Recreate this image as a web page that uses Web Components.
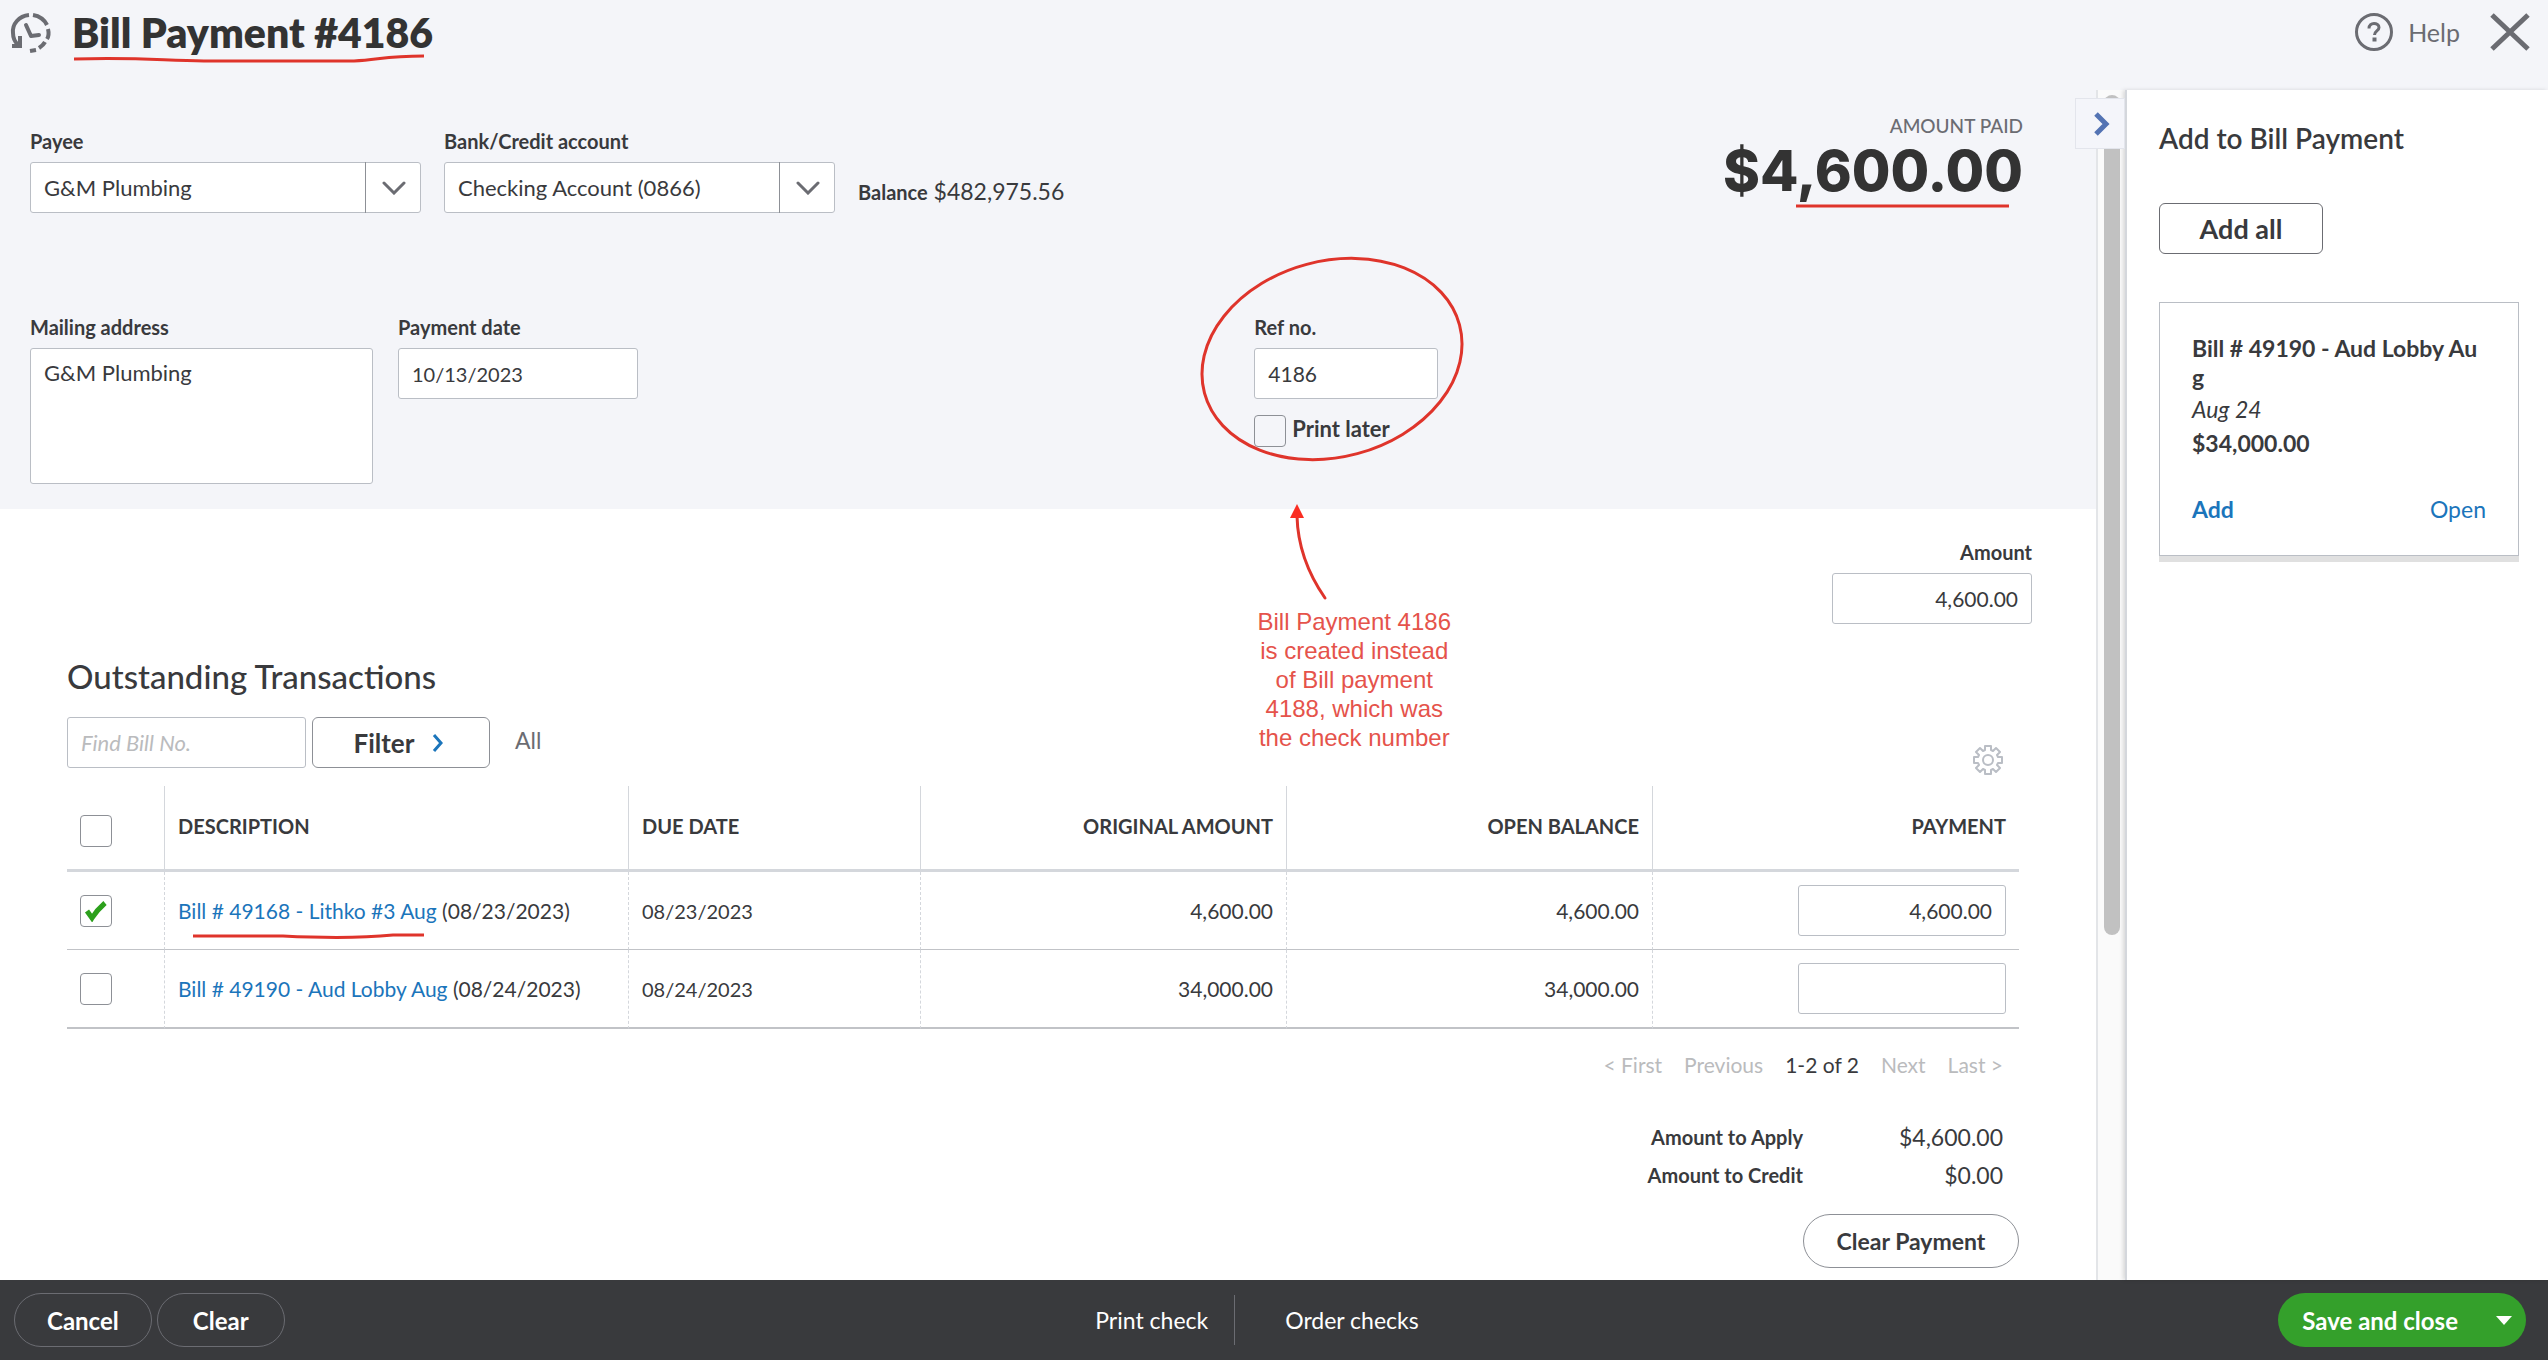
<!DOCTYPE html>
<html lang="en">
<head>
<meta charset="utf-8">
<title>Bill Payment #4186</title>
<style>
  body {
    margin: 0;
    font-family: Lato, "Open Sans", sans-serif;
    font-size: 21px;
    color: #393a3d;
  }
</style>
</head>
<body>
<bill-payment></bill-payment>
<script>
const base = `
  * { box-sizing: border-box; }
  button, input, select, textarea { font: inherit; color: inherit; margin: 0; }
  button { cursor: pointer; }
  a { color: #1b75bb; text-decoration: none; }
  svg { display: block; fill: none; }
`;

const define = (name, html, setup) => {
  const template = document.createElement('template');
  template.innerHTML = html;
  customElements.define(name, class extends HTMLElement {
    constructor() {
      super();
      this.attachShadow({ mode: 'open' });
      this.shadowRoot.appendChild(template.content.cloneNode(true));
    }
    connectedCallback() {
      if (setup) setup(this, this.shadowRoot);
    }
  });
};

define('text-field', `
  <style>
    ${base}
    :host { display: block; }
    label { display: block; font-size: 20px; font-weight: 700; line-height: 24px; margin-bottom: 9px; }
    label:empty { display: none; }
    input {
      display: block;
      width: 100%;
      height: 51px;
      padding: 0 13px;
      border: 1px solid #babec5;
      border-radius: 3px;
      background: #fff;
    }
    input::placeholder { color: #babbbd; font-style: italic; opacity: 1; }
    :host([right]) label, :host([right]) input { text-align: right; }
  </style>
  <label for="box"></label>
  <input id="box" type="text">
`, (el, root) => {
  const input = root.querySelector('input');
  root.querySelector('label').textContent = el.getAttribute('label') || '';
  input.value = el.getAttribute('value') || '';
  input.placeholder = el.getAttribute('placeholder') || '';
  if (el.hasAttribute('name')) input.setAttribute('aria-label', el.getAttribute('name'));
});

define('address-field', `
  <style>
    ${base}
    :host { display: block; }
    label { display: block; font-size: 20px; font-weight: 700; line-height: 24px; margin-bottom: 9px; }
    textarea {
      display: block;
      width: 100%;
      height: 136px;
      padding: 12px 13px;
      border: 1px solid #babec5;
      border-radius: 3px;
      background: #fff;
      font-size: 22px;
      line-height: 24px;
      resize: none;
    }
  </style>
  <label for="box"></label>
  <textarea id="box"></textarea>
`, (el, root) => {
  root.querySelector('label').textContent = el.getAttribute('label');
  root.querySelector('textarea').value = el.getAttribute('value');
});

define('select-field', `
  <style>
    ${base}
    :host { display: block; width: 391px; }
    label { display: block; font-size: 20px; font-weight: 700; line-height: 24px; margin-bottom: 9px; }
    .box { display: grid; grid-template-columns: 1fr 56px; }
    select {
      grid-area: 1 / 1 / 2 / 3;
      appearance: none;
      height: 51px;
      padding: 0 60px 0 13px;
      border: 1px solid #babec5;
      border-radius: 3px;
      background: #fff;
      font-size: 22px;
    }
    .arrow {
      grid-area: 1 / 2;
      z-index: 1;
      display: grid;
      place-items: center;
      border-left: 1px solid #8d9096;
      pointer-events: none;
    }
  </style>
  <label for="box"></label>
  <div class="box">
    <select id="box"><option></option></select>
    <span class="arrow">
      <svg width="24" height="14" viewBox="0 0 24 14" stroke="#6b6c72" stroke-width="3" stroke-linecap="round"><path d="M2 2l10 10L22 2"/></svg>
    </span>
  </div>
`, (el, root) => {
  root.querySelector('label').textContent = el.getAttribute('label');
  root.querySelector('option').textContent = el.getAttribute('value');
});

define('check-box', `
  <style>
    ${base}
    :host { display: inline-block; vertical-align: middle; }
    label { display: flex; gap: 6px; font-size: 22px; font-weight: 700; line-height: 28px; }
    span { display: grid; }
    input {
      grid-area: 1 / 1;
      appearance: none;
      width: 32px;
      height: 32px;
      border: 1px solid #8d9096;
      border-radius: 4px;
    }
    svg { grid-area: 1 / 1; place-self: center; visibility: hidden; pointer-events: none; }
    input:checked + svg { visibility: visible; }
  </style>
  <label>
    <span>
      <input type="checkbox">
      <svg width="24" height="22" viewBox="0 0 24 22"><path d="M3 11L8 18Q13 10 21 3" stroke="#2ca01c" stroke-width="5"/></svg>
    </span>
    <slot></slot>
  </label>
`, (el, root) => {
  const input = root.querySelector('input');
  input.checked = el.hasAttribute('checked');
  if (el.hasAttribute('name')) input.setAttribute('aria-label', el.getAttribute('name'));
});

define('page-header', `
  <style>
    ${base}
    :host {
      display: flex;
      align-items: flex-start;
      height: 90px;
      padding: 8px 18px 0 10px;
      background: #f4f5f9;
      color: #6b6c72;
    }
    button { display: flex; align-items: center; padding: 0; border: 0; background: none; }
    .history { margin-top: 4px; }
    h1 { position: relative; margin: 0 auto 0 20px; font-size: 41px; line-height: 50px; font-weight: 800; color: #333; }
    .mark { position: absolute; left: 2px; top: 45px; }
    .help { gap: 14px; margin-top: 4px; font-size: 25px; }
    .close { margin: 4px 0 0 30px; }
  </style>
  <button class="history" aria-label="History">
    <svg width="42" height="42" viewBox="0 0 42 42" stroke="#6b6c72" stroke-width="4">
      <path d="M19 3C9 4 2 12 3 21c0 5 2 9 5 12"/>
      <path d="M2 34h8V24" />
      <path d="M23 3c6 1 11 4 14 10M38 17c1 4 1 7-1 10M35 30c-1 2-3 4-6 6M26 38l-6 1"/>
      <path d="M16 13l5 11 8-1" stroke-linecap="round" stroke-linejoin="round"/>
    </svg>
  </button>
  <h1>Bill Payment #4186
    <svg class="mark" width="352" height="12" viewBox="0 0 352 12"><path d="M0 6C70 4 90 8 130 8H280C305 7 310 3 350 3" stroke="#df342b" stroke-width="3"/></svg>
  </h1>
  <button class="help">
    <svg width="40" height="40" viewBox="0 0 40 40" stroke="#6b6c72" stroke-width="3">
      <circle cx="20" cy="20" r="17.500"/>
      <path d="M15 16.500c0-7 10-6 10-1 0 3.500-4.500 3.500-4.500 7.500"/>
      <path d="M20.500 25.500v4" stroke-width="4"/>
    </svg>
    Help
  </button>
  <button class="close" aria-label="Close">
    <svg width="40" height="40" viewBox="0 0 40 40" stroke="#6b6c72" stroke-width="5"><path d="M2 3l36 34M38 3L2 37"/></svg>
  </button>
`);

define('payment-details', `
  <style>
    ${base}
    :host { display: block; padding: 24px 73px 25px 30px; background: #f4f5f9; }
    .top { display: flex; align-items: flex-end; gap: 23px; margin-bottom: 102px; }
    .balance { margin: 0; font-size: 23px; line-height: 42px; }
    .balance b { font-size: 20px; font-weight: 700; }
    .paid { position: relative; margin-left: auto; text-align: right; align-self: flex-start; }
    .paid div { font-size: 19px; line-height: 23px; font-weight: 500; color: #6b6c72; }
    .paid strong {
      display: block;
      margin-bottom: 8px;
      font: 800 56px/68px Inter, Lato, sans-serif;
      color: #333;
    }
    .paid svg { position: absolute; right: 14px; top: 90px; }
    .bottom { display: grid; grid-template-columns: 43fr 27fr; }
    .left { display: flex; align-items: flex-start; gap: 25px; }
    address-field { width: 343px; }
    .date { width: 240px; font-size: 20px; }
    .ref { position: relative; }
    .ref text-field { width: 184px; margin-bottom: 16px; }
    .drawing { position: absolute; left: -55px; top: -60px; pointer-events: none; }
    .note {
      position: absolute;
      left: 0;
      top: 292px;
      width: 200px;
      margin: 0;
      font: 24px/29px "Liberation Sans", Arial, sans-serif;
      color: #e5534b;
      text-align: center;
    }
  </style>
  <div class="top">
    <select-field label="Payee" value="G&amp;M Plumbing"></select-field>
    <select-field label="Bank/Credit account" value="Checking Account (0866)"></select-field>
    <p class="balance"><b>Balance</b> $482,975.56</p>
    <div class="paid">
      <div>AMOUNT PAID</div>
      <strong>$4,600.00</strong>
      <svg width="213" height="4"><path d="M0 2H213" stroke="#df342b" stroke-width="3"/></svg>
    </div>
  </div>
  <div class="bottom">
    <div class="left">
      <address-field label="Mailing address" value="G&amp;M Plumbing"></address-field>
      <text-field class="date" label="Payment date" value="10/13/2023"></text-field>
    </div>
    <div class="ref">
      <text-field label="Ref no." value="4186"></text-field>
      <check-box>Print later</check-box>
      <svg class="drawing" width="270" height="350" viewBox="0 0 270 350">
        <ellipse cx="133" cy="104" rx="132" ry="98" transform="rotate(-15 133 104)" stroke="#df342b" stroke-width="3"/>
        <path d="M98 261Q99 304 126 343" stroke="#df342b" stroke-width="3" stroke-linecap="round"/>
        <path d="M98 249l7 14H91z" fill="#fa2d22"/>
      </svg>
      <p class="note">Bill Payment 4186<br>is created instead<br>of Bill payment<br>4188, which was<br>the check number</p>
    </div>
  </div>
`);

define('bill-table', `
  <style>
    ${base}
    :host { display: block; }
    table { width: 100%; table-layout: fixed; border-collapse: separate; border-spacing: 0; }
    .pick { width: 98px; }
    .desc { width: 464px; }
    .due { width: 292px; }
    th, td { padding: 0 13px; text-align: left; border-right: 1px solid #d4d7dc; }
    th { height: 86px; padding-bottom: 3px; font-size: 20px; font-weight: 700; border-bottom: 3px solid #d4d7dc; }
    th.pick { padding: 6px 13px 0; }
    td { height: 78px; border-right-style: dashed; border-bottom: 1px solid #c1c3c7; }
    tr:last-child td { height: 79px; border-bottom-width: 2px; }
    th:last-child, td:last-child { border-right: 0; }
    td.date { font-size: 20px; }
    .num { text-align: right; }
    td text-field { width: 208px; margin-left: auto; }
    .link { position: relative; display: inline-block; }
    .link svg { position: absolute; left: 15px; top: 34px; }
  </style>
  <table>
    <thead>
      <tr>
        <th class="pick"><check-box name="Select all bills"></check-box></th>
        <th class="desc">DESCRIPTION</th>
        <th class="due">DUE DATE</th>
        <th class="num">ORIGINAL AMOUNT</th>
        <th class="num">OPEN BALANCE</th>
        <th class="num">PAYMENT</th>
      </tr>
    </thead>
    <tbody>
      <tr>
        <td><check-box name="Select bill 49168" checked></check-box></td>
        <td><span class="link"><a href="#">Bill # 49168 - Lithko #3 Aug</a><svg width="231" height="8" viewBox="0 0 231 8"><path d="M0 4H90C150 7 180 5 200 3H231" stroke="#df342b" stroke-width="3"/></svg></span> (08/23/2023)</td>
        <td class="date">08/23/2023</td>
        <td class="num">4,600.00</td>
        <td class="num">4,600.00</td>
        <td><text-field right name="Payment for bill 49168" value="4,600.00"></text-field></td>
      </tr>
      <tr>
        <td><check-box name="Select bill 49190"></check-box></td>
        <td><a href="#">Bill # 49190 - Aud Lobby Aug</a> (08/24/2023)</td>
        <td class="date">08/24/2023</td>
        <td class="num">34,000.00</td>
        <td class="num">34,000.00</td>
        <td><text-field right name="Payment for bill 49190"></text-field></td>
      </tr>
    </tbody>
  </table>
`);

define('outstanding-transactions', `
  <style>
    ${base}
    :host { display: block; padding: 31px 77px 12px 67px; }
    .amount { width: 200px; margin: 0 -13px 32px auto; }
    h2 { margin: 0 0 21px; font-size: 33px; line-height: 40px; font-weight: 500; }
    .tools { display: flex; align-items: flex-start; height: 61px; margin-bottom: 8px; }
    .tools text-field { width: 239px; font-size: 22px; }
    .filter {
      display: flex;
      align-items: center;
      justify-content: center;
      gap: 18px;
      width: 178px;
      height: 51px;
      padding: 0 10px 0 6px;
      margin-left: 6px;
      border: 1px solid #8d9096;
      border-radius: 6px;
      background: #fff;
      font-size: 26px;
      font-weight: 700;
    }
    .all { margin-left: 25px; font-size: 23px; line-height: 46px; color: #6b6c72; }
    .gear { align-self: flex-end; margin: 0 16px 3px auto; padding: 0; border: 0; background: none; }
    nav { display: flex; justify-content: flex-end; gap: 22px; margin: 22px 16px 39px; line-height: 28px; }
    nav a { color: #babbbd; }
    dl { display: grid; grid-template-columns: 1fr 200px; margin: 0 16px 20px; line-height: 38px; text-align: right; }
    dt { font-size: 20px; font-weight: 700; }
    dd { margin: 0; font-size: 23px; }
    .clear {
      display: block;
      width: 216px;
      height: 54px;
      margin-left: auto;
      border: 1px solid #8d9096;
      border-radius: 27px;
      background: #fff;
      font-size: 23px;
      font-weight: 700;
    }
  </style>
  <text-field class="amount" right label="Amount" value="4,600.00"></text-field>
  <h2>Outstanding Transactions</h2>
  <div class="tools">
    <text-field placeholder="Find Bill No." name="Find Bill No."></text-field>
    <button class="filter">Filter
      <svg width="12" height="18" viewBox="0 0 12 18"><path d="M2 1l7 8-7 8" stroke="#1b75bb" stroke-width="3"/></svg>
    </button>
    <span class="all">All</span>
    <button class="gear" aria-label="Table settings">
      <svg width="30" height="30" viewBox="0 0 30 30" stroke="#babec5" stroke-width="2" stroke-linejoin="round">
        <path d="M12 5V1h6v4l2 1 3-3 4 4-3 3 1 2h4v6h-4l-1 2 3 3-4 4-3-3-2 1v4h-6v-4l-2-1-3 3-4-4 3-3-1-2H1v-6h4l1-2-3-3 4-4 3 3z"/>
        <circle cx="15" cy="15" r="5"/>
      </svg>
    </button>
  </div>
  <bill-table></bill-table>
  <nav aria-label="Pages">
    <a href="#">&lt; First</a>
    <a href="#">Previous</a>
    <span>1-2 of 2</span>
    <a href="#">Next</a>
    <a href="#">Last &gt;</a>
  </nav>
  <dl>
    <dt>Amount to Apply</dt><dd>$4,600.00</dd>
    <dt>Amount to Credit</dt><dd>$0.00</dd>
  </dl>
  <button class="clear">Clear Payment</button>
`);

define('bill-card', `
  <style>
    ${base}
    :host {
      display: block;
      padding: 31px 32px 29px;
      border: 1px solid #babec5;
      box-shadow: 0 6px 0 #e0e0e0;
      font-size: 23px;
      line-height: 29px;
    }
    h3 { margin: 0; font: inherit; font-weight: 700; word-break: break-all; }
    em, strong { display: block; line-height: 34px; }
    strong { font-weight: 700; }
    .links { display: flex; justify-content: space-between; margin-top: 32px; line-height: 34px; }
    .add { font-weight: 700; }
  </style>
  <h3><slot name="title"></slot></h3>
  <em><slot name="date"></slot></em>
  <strong><slot name="amount"></slot></strong>
  <div class="links"><a class="add" href="#">Add</a><a href="#">Open</a></div>
`);

define('add-panel', `
  <style>
    ${base}
    :host {
      position: relative;
      display: block;
      width: 423px;
      padding: 30px 29px 0 32px;
      border-left: 2px solid #d4d7dc;
      background: #fff;
      box-shadow: -2px 0 4px #0002;
    }
    h2 { margin: 0 0 47px; font-size: 28px; line-height: 36px; font-weight: 600; }
    .all {
      display: block;
      width: 164px;
      height: 51px;
      margin-bottom: 48px;
      border: 1px solid #6b6c72;
      border-radius: 6px;
      background: #fff;
      font-size: 27px;
      font-weight: 700;
    }
    .toggle {
      position: absolute;
      left: -52px;
      top: 8px;
      display: grid;
      place-items: center;
      width: 50px;
      height: 51px;
      padding: 0 0 0 4px;
      border: 1px solid #e3e5ec;
      background: #f4f5fa;
    }
  </style>
  <button class="toggle" aria-label="Hide panel">
    <svg width="18" height="24" viewBox="0 0 18 24"><path d="M3 2l10 10L3 22" stroke="#5373b3" stroke-width="5"/></svg>
  </button>
  <h2>Add to Bill Payment</h2>
  <button class="all">Add all</button>
  <bill-card>
    <span slot="title">Bill # 49190 - Aud Lobby Aug</span>
    <span slot="date">Aug 24</span>
    <span slot="amount">$34,000.00</span>
  </bill-card>
`);

define('page-footer', `
  <style>
    ${base}
    :host {
      display: grid;
      grid-template-columns: 1fr auto 1fr;
      align-items: center;
      height: 80px;
      padding: 0 22px 0 14px;
      background: #393a3d;
      color: #fff;
    }
    .left { display: flex; gap: 5px; }
    .left button {
      min-width: 128px;
      height: 54px;
      padding: 0 32px;
      border: 1px solid #6b6c72;
      border-radius: 27px;
      background: none;
      font-size: 24px;
      font-weight: 700;
    }
    .links { display: flex; line-height: 50px; font-size: 23px; }
    .links a { padding: 0 26px 0 0; color: #fff; }
    .links a + a { padding-left: 50px; border-left: 1px solid #6b6c72; }
    .save {
      display: flex;
      justify-self: end;
      height: 54px;
      border-radius: 27px;
      background: #34a02b;
    }
    .save button { padding: 0 14px; border: 0; background: none; font-size: 24px; font-weight: 700; }
    .save button:first-child { padding: 0 24px; }
  </style>
  <div class="left"><button>Cancel</button><button>Clear</button></div>
  <div class="links"><a href="#">Print check</a><a href="#">Order checks</a></div>
  <div class="save">
    <button>Save and close</button>
    <button aria-label="More save options"><svg width="16" height="9" viewBox="0 0 16 9"><path d="M0 0h16L8 9z" fill="#fff"/></svg></button>
  </div>
`);

define('bill-payment', `
  <style>
    ${base}
    :host { display: flex; flex-direction: column; min-height: 100vh; background: #fff; }
    .body { flex: 1; display: flex; }
    main { flex: 1; min-width: 0; }
    .track { width: 29px; padding: 5px 0 0 6px; border-left: 2px solid #e3e5e8; background: #fafafa; }
    .thumb { width: 16px; height: 840px; border-radius: 8px; background: #c1c1c1; }
  </style>
  <page-header></page-header>
  <div class="body">
    <main>
      <payment-details></payment-details>
      <outstanding-transactions></outstanding-transactions>
    </main>
    <div class="track"><div class="thumb"></div></div>
    <add-panel></add-panel>
  </div>
  <page-footer></page-footer>
`);
</script>
</body>
</html>
